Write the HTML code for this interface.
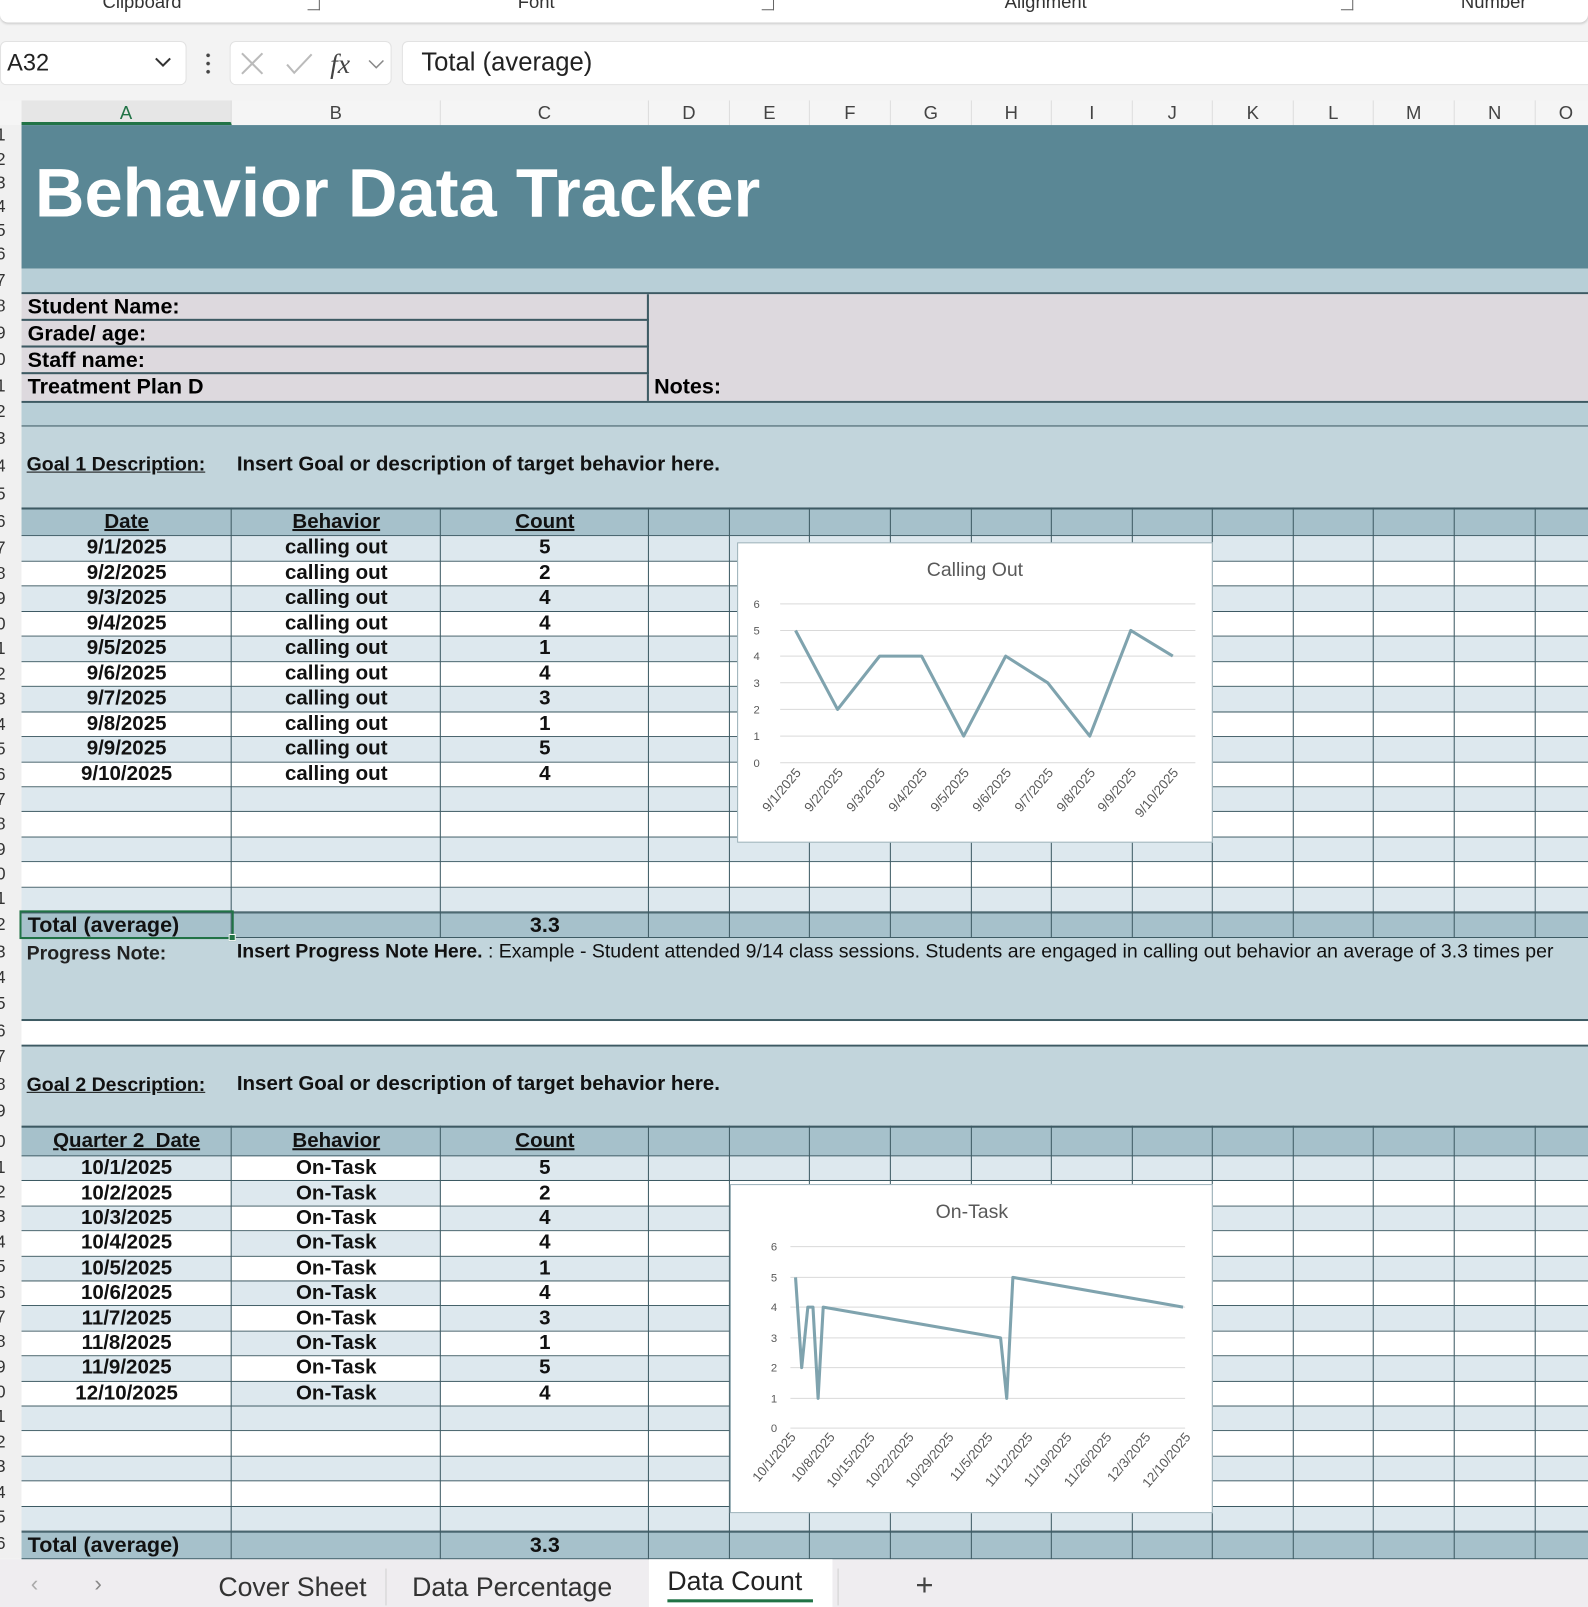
<!DOCTYPE html>
<html><head><meta charset="utf-8"><style>
*{margin:0;padding:0;box-sizing:border-box}
body{width:1588px;height:1607px;overflow:hidden;background:#fff;font-family:"Liberation Sans Narrow","Liberation Sans",sans-serif}
#s{position:absolute;left:0;top:0;width:1549px;height:1568px;transform:scale(1.02518);transform-origin:0 0;overflow:hidden;background:#f3f3f3}
.a{position:absolute}
.r{position:absolute;left:21px;width:1528px;border-bottom:1px solid #3d5a63;display:flex;align-items:center;font-weight:bold;font-size:20px;color:#111}
.r span{display:block;text-align:center;flex:none}
.c1{width:205px}.c2{width:204px}.c3{width:203px}
.L{background:#dde8ee}.W{background:#fff}.H{background:#a6c1cb}
.vg{position:absolute;left:21px;width:1528px;pointer-events:none;background-image:
linear-gradient(#3d5a63,#3d5a63),linear-gradient(#3d5a63,#3d5a63),linear-gradient(#3d5a63,#3d5a63),linear-gradient(#3d5a63,#3d5a63),linear-gradient(#3d5a63,#3d5a63),linear-gradient(#3d5a63,#3d5a63),linear-gradient(#3d5a63,#3d5a63),linear-gradient(#3d5a63,#3d5a63),linear-gradient(#3d5a63,#3d5a63),linear-gradient(#3d5a63,#3d5a63),linear-gradient(#3d5a63,#3d5a63),linear-gradient(#3d5a63,#3d5a63),linear-gradient(#3d5a63,#3d5a63),linear-gradient(#3d5a63,#3d5a63);
background-repeat:no-repeat;background-size:1px 100%;
background-position:204px 0,408px 0,611px 0,690px 0,768px 0,847px 0,926px 0,1004px 0,1083px 0,1161px 0,1240px 0,1318px 0,1397px 0,1476px 0}
.rh{position:absolute;left:0;width:21px;background:#f0f0f0;font-family:"Liberation Sans",sans-serif;font-size:17px;color:#333;overflow:hidden}
.rh div{position:absolute;left:-4px}
.ch{position:absolute;top:98px;height:24px;font-family:"Liberation Sans",sans-serif;font-size:18px;color:#444;text-align:center;line-height:24px;border-right:1px solid #ddd}
.u{text-decoration:underline}
</style></head><body><div id="s">

<div class="a" style="left:0;top:0;width:1549px;height:22px;background:#fff;border-radius:0 0 8px 8px;box-shadow:0 1px 2px #ccc"></div>
<div class="a" style="left:100px;top:-8px;font-family:'Liberation Sans',sans-serif;font-size:18px;color:#333">Clipboard</div>
<div class="a" style="left:505px;top:-8px;font-family:'Liberation Sans',sans-serif;font-size:18px;color:#333">Font</div>
<div class="a" style="left:980px;top:-8px;font-family:'Liberation Sans',sans-serif;font-size:18px;color:#333">Alignment</div>
<div class="a" style="left:1425px;top:-8px;font-family:'Liberation Sans',sans-serif;font-size:18px;color:#333">Number</div>
<div class="a" style="left:300px;top:0;width:12px;height:10px;border-right:1px solid #666;border-bottom:1px solid #666"></div>
<div class="a" style="left:743px;top:0;width:12px;height:10px;border-right:1px solid #666;border-bottom:1px solid #666"></div>
<div class="a" style="left:1308px;top:0;width:12px;height:10px;border-right:1px solid #666;border-bottom:1px solid #666"></div>

<div class="a" style="left:0;top:40px;width:182px;height:43px;background:#fff;border-radius:6px;border:1px solid #e2e2e2"></div>
<div class="a" style="left:7px;top:48px;font-family:'Liberation Sans',sans-serif;font-size:23px;color:#222">A32</div>
<svg class="a" style="left:150px;top:55px" width="18" height="12"><path d="M2 2 L9 9 L16 2" stroke="#333" stroke-width="2" fill="none"/></svg>
<div class="a" style="left:201px;top:50px;width:4px;height:24px;background:radial-gradient(circle,#444 1.6px,transparent 2px) 0 0/4px 8px"></div>
<div class="a" style="left:224px;top:40px;width:158px;height:43px;background:#fff;border-radius:6px;border:1px solid #e2e2e2"></div>
<svg class="a" style="left:232px;top:48px" width="150" height="30"><path d="M4 4 L24 24 M24 4 L4 24" stroke="#bbb" stroke-width="2"/><path d="M48 15 L55 23 L72 5" stroke="#bbb" stroke-width="2" fill="none"/><text x="90" y="23" font-family="Liberation Serif,serif" font-style="italic" font-size="27" fill="#444">fx</text><path d="M128 11 L135 18 L142 11" stroke="#888" stroke-width="1.5" fill="none"/></svg>
<div class="a" style="left:392px;top:40px;width:1170px;height:43px;background:#fff;border-radius:6px;border:1px solid #e2e2e2"></div>
<div class="a" style="left:411px;top:47px;font-family:'Liberation Sans Narrow','Liberation Sans',sans-serif;font-size:25px;color:#222">Total (average)</div>

<div class="a" style="left:0;top:98px;width:1549px;height:24px;background:#f5f5f5"></div>
<div class="ch" style="left:21px;width:205px;background:#e6e6e6;color:#217346;border-bottom:3px solid #217346">A</div>
<div class="ch" style="left:226px;width:204px">B</div>
<div class="ch" style="left:430px;width:203px">C</div>
<div class="ch" style="left:633px;width:79px">D</div>
<div class="ch" style="left:712px;width:78px">E</div>
<div class="ch" style="left:790px;width:79px">F</div>
<div class="ch" style="left:869px;width:79px">G</div>
<div class="ch" style="left:948px;width:78px">H</div>
<div class="ch" style="left:1026px;width:79px">I</div>
<div class="ch" style="left:1105px;width:78px">J</div>
<div class="ch" style="left:1183px;width:79px">K</div>
<div class="ch" style="left:1262px;width:78px">L</div>
<div class="ch" style="left:1340px;width:79px">M</div>
<div class="ch" style="left:1419px;width:79px">N</div>
<div class="ch" style="left:1498px;width:60px">O</div>

<div class="rh" style="top:122px;height:1398px">
<div style="top:0">1</div><div style="top:24px">2</div><div style="top:47px">3</div><div style="top:70px">4</div><div style="top:93px">5</div><div style="top:116px">6</div><div style="top:142px">7</div><div style="top:167px">8</div><div style="top:193px">9</div><div style="top:219px">0</div><div style="top:245px">1</div><div style="top:270px">2</div><div style="top:296px">3</div><div style="top:323px">4</div><div style="top:350px">5</div><div style="top:377px">6</div><div style="top:403px">7</div><div style="top:428px">8</div><div style="top:452px">9</div><div style="top:477px">0</div><div style="top:501px">1</div><div style="top:526px">2</div><div style="top:550px">3</div><div style="top:575px">4</div><div style="top:599px">5</div><div style="top:624px">6</div><div style="top:648px">7</div><div style="top:672px">8</div><div style="top:697px">9</div><div style="top:721px">0</div><div style="top:745px">1</div><div style="top:770px">2</div><div style="top:797px">3</div><div style="top:822px">4</div><div style="top:847px">5</div><div style="top:874px">6</div><div style="top:899px">7</div><div style="top:926px">8</div><div style="top:952px">9</div><div style="top:982px">0</div><div style="top:1007px">1</div><div style="top:1031px">2</div><div style="top:1055px">3</div><div style="top:1080px">4</div><div style="top:1104px">5</div><div style="top:1129px">6</div><div style="top:1153px">7</div><div style="top:1177px">8</div><div style="top:1202px">9</div><div style="top:1226px">0</div><div style="top:1250px">1</div><div style="top:1275px">2</div><div style="top:1299px">3</div><div style="top:1324px">4</div><div style="top:1348px">5</div><div style="top:1374px">6</div>
</div>

<div class="a" style="left:21px;top:122px;width:1528px;height:140px;background:#5a8795"></div>
<div class="a" style="left:34px;top:150px;font-family:'Liberation Sans',sans-serif;font-weight:bold;font-size:67px;color:#fff">Behavior Data Tracker</div>

<div class="a" style="left:21px;top:262px;width:1528px;height:25px;background:#b8cfd7;border-bottom:2px solid #3d5a63"></div>
<div class="a" style="left:21px;top:391px;width:1528px;height:104px;background:#c2d5dc;border-top:2px solid #3d5a63"></div>
<div class="a" style="left:21px;top:391px;width:1528px;height:25px;background:#b8cfd7;border-top:2px solid #3d5a63;border-bottom:1px solid #3d5a63"></div>

<div class="a" style="left:21px;top:287px;width:1528px;height:104px;background:#ddd9de"></div>
<div class="a" style="left:21px;top:287px;width:612px;height:26px;border-bottom:2px solid #3d5a63;border-right:2px solid #3d5a63;font-weight:bold;font-size:21px;padding-left:6px;line-height:26px">Student Name:</div>
<div class="a" style="left:21px;top:313px;width:612px;height:26px;border-bottom:2px solid #3d5a63;border-right:2px solid #3d5a63;font-weight:bold;font-size:21px;padding-left:6px;line-height:26px">Grade/ age:</div>
<div class="a" style="left:21px;top:339px;width:612px;height:26px;border-bottom:2px solid #3d5a63;border-right:2px solid #3d5a63;font-weight:bold;font-size:21px;padding-left:6px;line-height:26px">Staff name:</div>
<div class="a" style="left:21px;top:365px;width:612px;height:26px;border-right:2px solid #3d5a63;font-weight:bold;font-size:21px;padding-left:6px;line-height:26px">Treatment Plan D</div>
<div class="a" style="left:638px;top:365px;font-weight:bold;font-size:21px;line-height:26px">Notes:</div>

<div class="a" style="left:26px;top:443px;font-size:19px;color:#111;font-weight:bold"><span class="u">Goal 1 Description:</span></div>
<div class="a" style="left:231px;top:442px;font-family:'Liberation Sans',sans-serif;font-size:20px;font-weight:bold;color:#111">Insert Goal or description of target behavior here.</div>

<div class="r H" style="top:495px;height:28px;border-top:2px solid #3d5a63"><span class="c1 u">Date</span><span class="c2 u">Behavior</span><span class="c3 u">Count</span></div>
<div class="r L" style="top:523px;height:24.5px"><span class="c1">9/1/2025</span><span class="c2">calling out</span><span class="c3">5</span></div>
<div class="r W" style="top:547.5px;height:24.5px"><span class="c1">9/2/2025</span><span class="c2">calling out</span><span class="c3">2</span></div>
<div class="r L" style="top:572px;height:24.5px"><span class="c1">9/3/2025</span><span class="c2">calling out</span><span class="c3">4</span></div>
<div class="r W" style="top:596.5px;height:24.5px"><span class="c1">9/4/2025</span><span class="c2">calling out</span><span class="c3">4</span></div>
<div class="r L" style="top:621px;height:24.5px"><span class="c1">9/5/2025</span><span class="c2">calling out</span><span class="c3">1</span></div>
<div class="r W" style="top:645.5px;height:24.5px"><span class="c1">9/6/2025</span><span class="c2">calling out</span><span class="c3">4</span></div>
<div class="r L" style="top:670px;height:24.5px"><span class="c1">9/7/2025</span><span class="c2">calling out</span><span class="c3">3</span></div>
<div class="r W" style="top:694.5px;height:24.5px"><span class="c1">9/8/2025</span><span class="c2">calling out</span><span class="c3">1</span></div>
<div class="r L" style="top:719px;height:24.5px"><span class="c1">9/9/2025</span><span class="c2">calling out</span><span class="c3">5</span></div>
<div class="r W" style="top:743.5px;height:24.5px"><span class="c1">9/10/2025</span><span class="c2">calling out</span><span class="c3">4</span></div>
<div class="r L" style="top:768px;height:24.4px"></div>
<div class="r W" style="top:792.4px;height:24.4px"></div>
<div class="r L" style="top:816.8px;height:24.4px"></div>
<div class="r W" style="top:841.2px;height:24.4px"></div>
<div class="r L" style="top:865.6px;height:24.4px"></div>
<div class="r H" style="top:890px;height:25px;border-top:1px solid #3d5a63"><span class="c1" style="text-align:left;padding-left:6px;font-size:21px">Total (average)</span><span class="c2"></span><span class="c3" style="font-size:21px">3.3</span></div>
<div class="vg" style="top:495px;height:420px"></div>

<div class="a" style="left:21px;top:915px;width:1528px;height:81px;background:#c2d5dc;border-bottom:2px solid #3d5a63"></div>
<div class="a" style="left:26px;top:920px;font-size:19px;font-weight:bold;color:#222">Progress Note:</div>
<div class="a" style="left:231px;top:918px;font-size:19px;color:#111;white-space:nowrap"><b>Insert Progress Note Here.</b> : Example - Student attended 9/14 class sessions. Students are engaged in calling out behavior an average of 3.3 times per</div>
<div class="a" style="left:21px;top:996px;width:1528px;height:25px;background:#fff;border-bottom:2px solid #3d5a63"></div>
<div class="a" style="left:21px;top:1021px;width:1528px;height:77px;background:#c2d5dc"></div>
<div class="a" style="left:26px;top:1048px;font-size:19px;color:#111;font-weight:bold"><span class="u">Goal 2 Description:</span></div>
<div class="a" style="left:231px;top:1046px;font-family:'Liberation Sans',sans-serif;font-size:20px;font-weight:bold;color:#111">Insert Goal or description of target behavior here.</div>

<div class="r H" style="top:1098px;height:30px;border-top:2px solid #3d5a63"><span class="c1 u">Quarter 2&nbsp; Date</span><span class="c2 u">Behavior</span><span class="c3 u">Count</span></div>
<div class="r L" style="top:1128px;height:24.4px;background:linear-gradient(90deg,#dde8ee 205px,#fff 205px,#fff 409px,#dde8ee 409px)"><span class="c1">10/1/2025</span><span class="c2">On-Task</span><span class="c3">5</span></div>
<div class="r W" style="top:1152.4px;height:24.4px;background:linear-gradient(90deg,#fff 205px,#dde8ee 205px,#dde8ee 409px,#fff 409px)"><span class="c1">10/2/2025</span><span class="c2">On-Task</span><span class="c3">2</span></div>
<div class="r L" style="top:1176.8px;height:24.4px;background:linear-gradient(90deg,#dde8ee 205px,#fff 205px,#fff 409px,#dde8ee 409px)"><span class="c1">10/3/2025</span><span class="c2">On-Task</span><span class="c3">4</span></div>
<div class="r W" style="top:1201.2px;height:24.4px;background:linear-gradient(90deg,#fff 205px,#dde8ee 205px,#dde8ee 409px,#fff 409px)"><span class="c1">10/4/2025</span><span class="c2">On-Task</span><span class="c3">4</span></div>
<div class="r L" style="top:1225.6px;height:24.4px;background:linear-gradient(90deg,#dde8ee 205px,#fff 205px,#fff 409px,#dde8ee 409px)"><span class="c1">10/5/2025</span><span class="c2">On-Task</span><span class="c3">1</span></div>
<div class="r W" style="top:1250px;height:24.4px;background:linear-gradient(90deg,#fff 205px,#dde8ee 205px,#dde8ee 409px,#fff 409px)"><span class="c1">10/6/2025</span><span class="c2">On-Task</span><span class="c3">4</span></div>
<div class="r L" style="top:1274.4px;height:24.4px;background:linear-gradient(90deg,#dde8ee 205px,#fff 205px,#fff 409px,#dde8ee 409px)"><span class="c1">11/7/2025</span><span class="c2">On-Task</span><span class="c3">3</span></div>
<div class="r W" style="top:1298.8px;height:24.4px;background:linear-gradient(90deg,#fff 205px,#dde8ee 205px,#dde8ee 409px,#fff 409px)"><span class="c1">11/8/2025</span><span class="c2">On-Task</span><span class="c3">1</span></div>
<div class="r L" style="top:1323.2px;height:24.4px;background:linear-gradient(90deg,#dde8ee 205px,#fff 205px,#fff 409px,#dde8ee 409px)"><span class="c1">11/9/2025</span><span class="c2">On-Task</span><span class="c3">5</span></div>
<div class="r W" style="top:1347.6px;height:24.4px;background:linear-gradient(90deg,#fff 205px,#dde8ee 205px,#dde8ee 409px,#fff 409px)"><span class="c1">12/10/2025</span><span class="c2">On-Task</span><span class="c3">4</span></div>
<div class="r L" style="top:1372px;height:24.4px"></div>
<div class="r W" style="top:1396.4px;height:24.4px"></div>
<div class="r L" style="top:1420.8px;height:24.4px"></div>
<div class="r W" style="top:1445.2px;height:24.4px"></div>
<div class="r L" style="top:1469.6px;height:24.4px"></div>
<div class="r H" style="top:1494px;height:27px;border-top:1px solid #3d5a63"><span class="c1" style="text-align:left;padding-left:6px;font-size:21px">Total (average)</span><span class="c2"></span><span class="c3" style="font-size:21px">3.3</span></div>
<div class="vg" style="top:1098px;height:423px"></div>

<div class="a" style="left:19px;top:888px;width:209px;height:28px;border:2px solid #217346"></div>
<div class="a" style="left:223px;top:911px;width:7px;height:7px;background:#217346;border:1px solid #fff"></div>

<svg class="a" style="left:719px;top:529px;background:#fff;border:1px solid #9ab0b8" width="464" height="293">
<text x="231" y="32" text-anchor="middle" font-family="Liberation Sans Narrow,Liberation Sans,sans-serif" font-size="19" fill="#595959">Calling Out</text>
<g stroke="#d9d9d9" stroke-width="1">
<line x1="41" x2="446" y1="59" y2="59"/><line x1="41" x2="446" y1="85" y2="85"/><line x1="41" x2="446" y1="110" y2="110"/><line x1="41" x2="446" y1="136" y2="136"/><line x1="41" x2="446" y1="162" y2="162"/><line x1="41" x2="446" y1="188" y2="188"/><line x1="41" x2="446" y1="214" y2="214"/>
</g>
<g font-family="Liberation Sans,sans-serif" font-size="11" fill="#595959" text-anchor="middle">
<text x="18" y="63">6</text><text x="18" y="89">5</text><text x="18" y="114">4</text><text x="18" y="140">3</text><text x="18" y="166">2</text><text x="18" y="192">1</text><text x="18" y="218">0</text>
</g>
<polyline fill="none" stroke="#7fa3ae" stroke-width="3" stroke-linejoin="round" points="56,85 97,162 138,110 179,110 220,188 261,110 302,136 343,188 383,85 424,110"/>
<g font-family="Liberation Sans Narrow,Liberation Sans,sans-serif" font-size="13" fill="#595959" text-anchor="end">
<text transform="translate(62,224) rotate(-50)">9/1/2025</text><text transform="translate(103,224) rotate(-50)">9/2/2025</text><text transform="translate(144,224) rotate(-50)">9/3/2025</text><text transform="translate(185,224) rotate(-50)">9/4/2025</text><text transform="translate(226,224) rotate(-50)">9/5/2025</text><text transform="translate(267,224) rotate(-50)">9/6/2025</text><text transform="translate(308,224) rotate(-50)">9/7/2025</text><text transform="translate(349,224) rotate(-50)">9/8/2025</text><text transform="translate(389,224) rotate(-50)">9/9/2025</text><text transform="translate(430,224) rotate(-50)">9/10/2025</text>
</g>
</svg>

<svg class="a" style="left:712px;top:1155px;background:#fff;border:1px solid #9ab0b8" width="471" height="321">
<text x="235" y="32" text-anchor="middle" font-family="Liberation Sans Narrow,Liberation Sans,sans-serif" font-size="19" fill="#595959">On-Task</text>
<g stroke="#d9d9d9" stroke-width="1">
<line x1="58" x2="443" y1="60" y2="60"/><line x1="58" x2="443" y1="90" y2="90"/><line x1="58" x2="443" y1="119" y2="119"/><line x1="58" x2="443" y1="149" y2="149"/><line x1="58" x2="443" y1="178" y2="178"/><line x1="58" x2="443" y1="208" y2="208"/><line x1="58" x2="443" y1="237" y2="237"/>
</g>
<g font-family="Liberation Sans,sans-serif" font-size="11" fill="#595959" text-anchor="middle">
<text x="42" y="64">6</text><text x="42" y="94">5</text><text x="42" y="123">4</text><text x="42" y="153">3</text><text x="42" y="182">2</text><text x="42" y="212">1</text><text x="42" y="241">0</text>
</g>
<polyline fill="none" stroke="#7fa3ae" stroke-width="3" stroke-linejoin="round" points="63,90 69,178 75,119 80,119 85,208 90,119 263,149 269,208 275,90 441,119"/>
<g font-family="Liberation Sans Narrow,Liberation Sans,sans-serif" font-size="13" fill="#595959" text-anchor="end">
<text transform="translate(64,246) rotate(-50)">10/1/2025</text><text transform="translate(102,246) rotate(-50)">10/8/2025</text><text transform="translate(141,246) rotate(-50)">10/15/2025</text><text transform="translate(179,246) rotate(-50)">10/22/2025</text><text transform="translate(218,246) rotate(-50)">10/29/2025</text><text transform="translate(256,246) rotate(-50)">11/5/2025</text><text transform="translate(295,246) rotate(-50)">11/12/2025</text><text transform="translate(333,246) rotate(-50)">11/19/2025</text><text transform="translate(372,246) rotate(-50)">11/26/2025</text><text transform="translate(410,246) rotate(-50)">12/3/2025</text><text transform="translate(449,246) rotate(-50)">12/10/2025</text>
</g>
</svg>

<div class="a" style="left:0;top:1521px;width:1549px;height:47px;background:#efedf0"></div>
<div class="a" style="left:30px;top:1532px;font-family:'Liberation Sans',sans-serif;font-size:22px;color:#aaa">&lsaquo;</div>
<div class="a" style="left:92px;top:1532px;font-family:'Liberation Sans',sans-serif;font-size:22px;color:#888">&rsaquo;</div>
<div class="a" style="left:213px;top:1533px;font-size:26px;color:#333">Cover Sheet</div>
<div class="a" style="left:376px;top:1530px;width:1px;height:36px;background:#d0d0d0"></div>
<div class="a" style="left:402px;top:1533px;font-size:26px;color:#333">Data Percentage</div>
<div class="a" style="left:633px;top:1521px;width:179px;height:47px;background:#fff"></div>
<div class="a" style="left:651px;top:1527px;font-size:26px;color:#222">Data Count</div>
<div class="a" style="left:651px;top:1560px;width:142px;height:3px;background:#217346"></div>
<div class="a" style="left:817px;top:1530px;width:1px;height:36px;background:#d0d0d0"></div>
<div class="a" style="left:893px;top:1530px;font-family:'Liberation Sans',sans-serif;font-size:30px;color:#444">+</div>

</div></body></html>
